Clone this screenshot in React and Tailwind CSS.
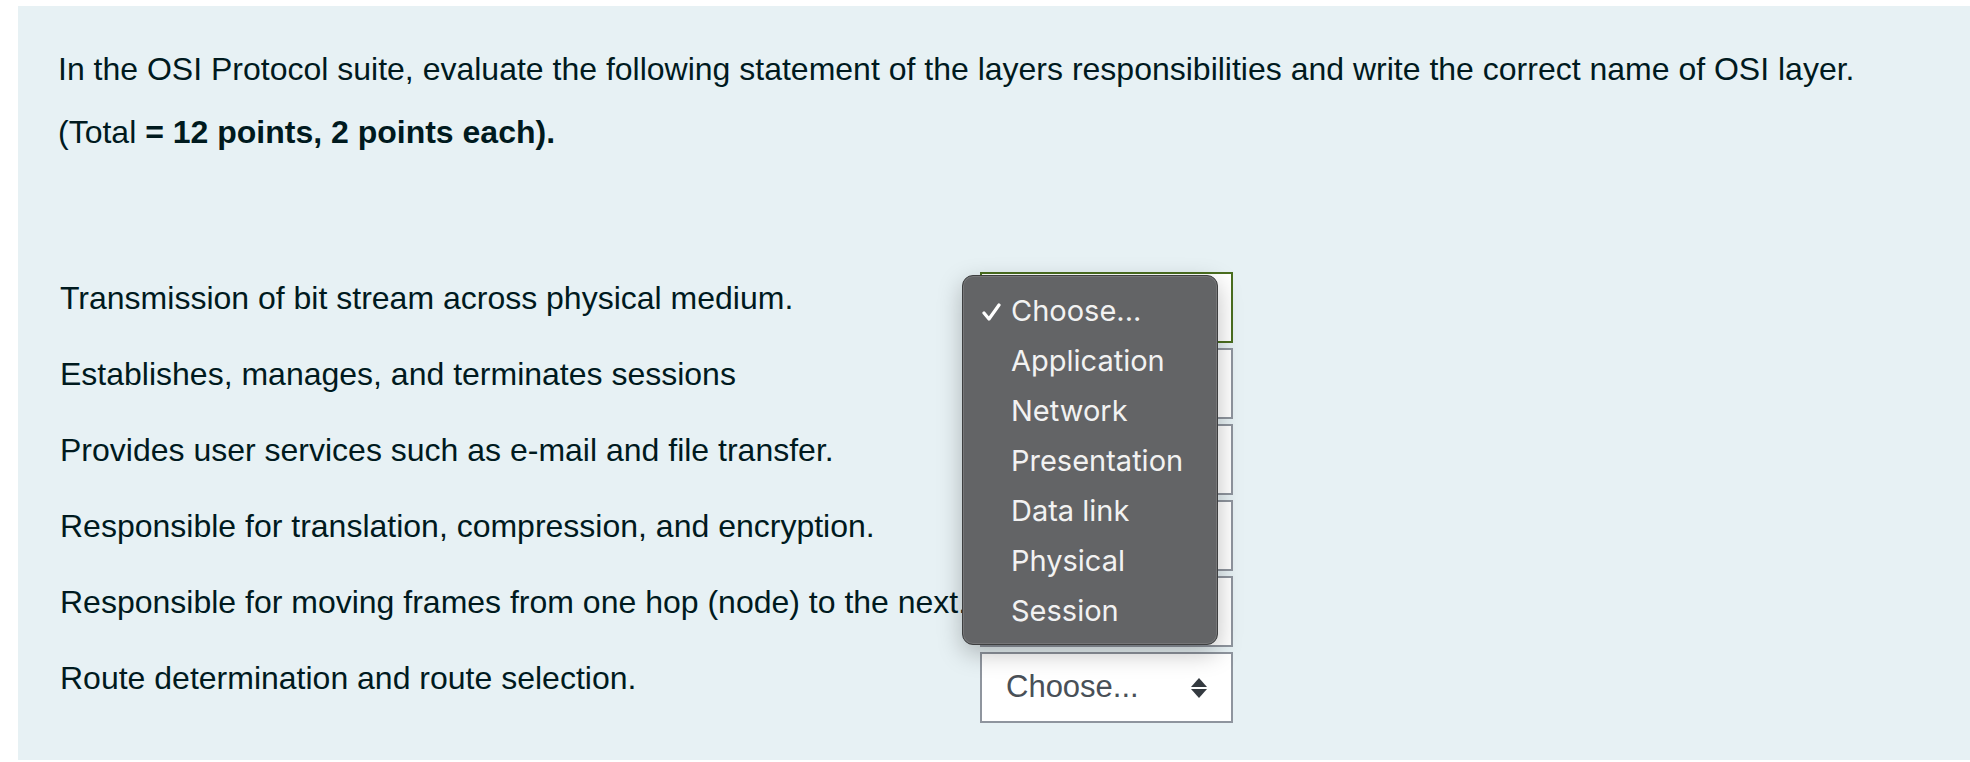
import React from "react";

const rows = [
  "Transmission of bit stream across physical medium.",
  "Establishes, manages, and terminates sessions",
  "Provides user services such as e-mail and file transfer.",
  "Responsible for translation, compression, and encryption.",
  "Responsible for moving frames from one hop (node) to the next.",
  "Route determination and route selection.",
];

const options = ["Choose...", "Application", "Network", "Presentation", "Data link", "Physical", "Session"];

function Arrows() {
  return (
    <svg width="16" height="20" viewBox="0 0 16 20" className="shrink-0">
      <path d="M8 0 L16 9 L0 9 Z" fill="#343a40" />
      <path d="M0 11 L16 11 L8 20 Z" fill="#343a40" />
    </svg>
  );
}

function Select({ focused }) {
  return (
    <div
      className={
        "h-[71px] w-[253px] bg-white flex items-center pl-[24px] pr-[24px] justify-between border-2 " +
        (focused ? "border-[#4a6e1f]" : "border-[#8f959e]")
      }
    >
      <span className="text-[#495057] text-[31px]">Choose...</span>
      <Arrows />
    </div>
  );
}

export default function App() {
  return (
    <div
      className="relative w-[1970px] h-[762px] bg-white pt-[6px] pl-[18px] overflow-hidden"
      style={{ fontFamily: '"Liberation Sans", Arial, sans-serif' }}
    >
      <div className="bg-[#e7f1f4] h-[754px] pl-[40px] pt-[41px] text-[#001a1e]">
        <p className="text-[32px] leading-[45px]">
          In the OSI Protocol suite, evaluate the following statement of the layers responsibilities and write the correct name of OSI layer.
        </p>
        <p className="text-[32px] leading-[45px] mt-[18px]">
          (Total <b>= 12 points, 2 points each).</b>
        </p>
        <div className="mt-[117px] grid grid-cols-[922px_253px]">
          {rows.map((r, i) => (
            <React.Fragment key={i}>
              <div className="pl-[2px] pt-[4px] text-[32px] leading-[45px] whitespace-nowrap h-[76px]">{r}</div>
              <div className="h-[76px]">
                <Select focused={i === 0} />
              </div>
            </React.Fragment>
          ))}
        </div>
      </div>

      <div
        className="absolute left-[962px] top-[275px] w-[256px] h-[370px] rounded-[11px] bg-[#636466] border border-[#3e3f40] py-[10px] shadow-[0_8px_24px_rgba(0,0,0,0.25),inset_0_0_0_1px_rgba(255,255,255,0.12)]"
        style={{ fontFamily: 'Inter, "Noto Sans", sans-serif' }}
      >
        {options.map((o, i) => (
          <div key={o} className="h-[50px] flex items-center relative pl-[48px] text-[29px] text-[#f2f2f2]">
            {i === 0 && (
              <svg width="19" height="18" viewBox="0 0 19 18" className="absolute left-[19px] top-[17px]">
                <path d="M2 10 L7 16 L17 2" fill="none" stroke="#ffffff" strokeWidth="3.2" strokeLinecap="round" strokeLinejoin="round" />
              </svg>
            )}
            <span>{o}</span>
          </div>
        ))}
      </div>
    </div>
  );
}
